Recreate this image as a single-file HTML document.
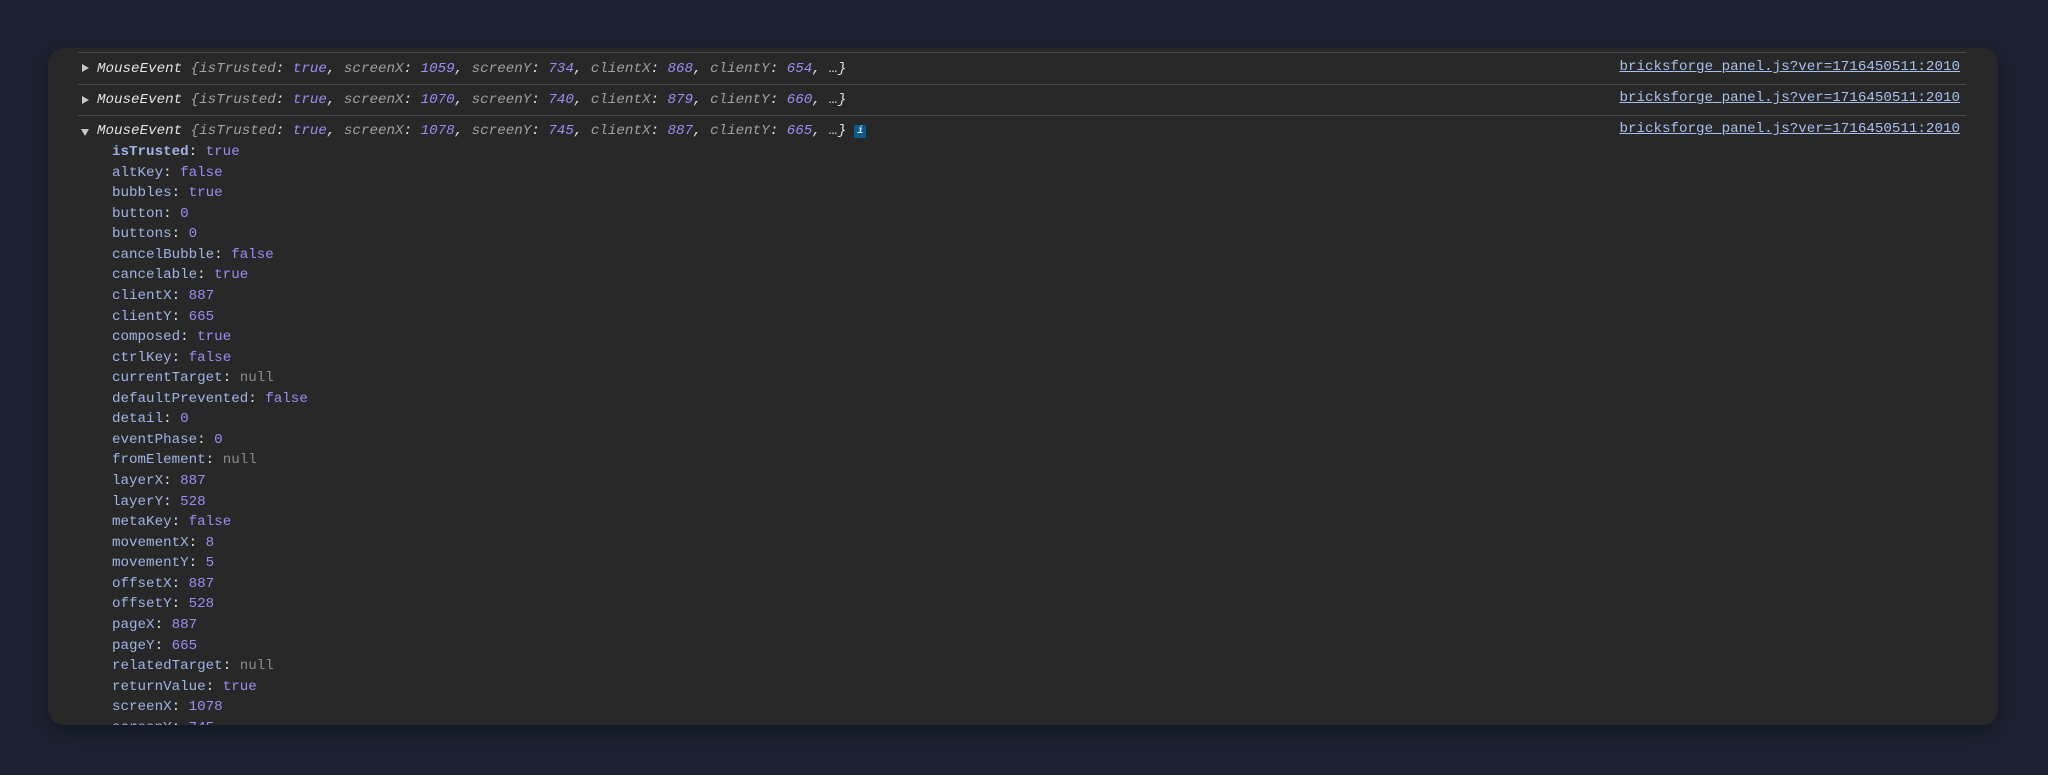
<!DOCTYPE html>
<html><head><meta charset="utf-8"><style>
html,body{margin:0;padding:0;width:2048px;height:775px;background:#1d2232;overflow:hidden}
.panel{position:absolute;left:48px;top:48px;width:1950px;height:677px;background:#282828;border-radius:16px;overflow:hidden;box-shadow:0 6px 24px rgba(0,0,0,.35)}
.t{position:absolute;font-family:"Liberation Mono",monospace;font-size:14.2px;line-height:20px;white-space:pre;color:#e3e3e3}
.hl{position:absolute;left:30px;width:1888px;height:1px;background:#4a4a4a}
.i{font-style:italic}
.k{color:#a0a0a0}
.n{color:#9d8cf5}
.p{color:#9fb4e6}
.nl{color:#8a8a8a}
.lk{color:#a8c0ee;text-decoration:underline;right:38px}
.tri{position:absolute;width:0;height:0}
.info{display:inline-block;width:12px;height:13px;background:#0e5a8a;color:#cfe6ff;font-size:10px;line-height:13px;text-align:center;border-radius:2px;vertical-align:1px;margin-left:8px;font-style:italic;font-weight:bold}
</style></head><body>
<div class="panel">
<div class="hl" style="top:4px"></div>
<div class="hl" style="top:36px"></div>
<div class="hl" style="top:67px"></div>

<div class="tri" style="left:34px;top:16px;border-left:7px solid #c8c8c8;border-top:4px solid transparent;border-bottom:4px solid transparent"></div>
<div class="t i" style="left:49px;top:11px">MouseEvent <span class="k">{isTrusted</span>: <span class="n">true</span>, <span class="k">screenX</span>: <span class="n">1059</span>, <span class="k">screenY</span>: <span class="n">734</span>, <span class="k">clientX</span>: <span class="n">868</span>, <span class="k">clientY</span>: <span class="n">654</span>, …}</div>
<div class="t lk" style="top:9px">bricksforge_panel.js?ver=1716450511:2010</div>

<div class="tri" style="left:34px;top:48px;border-left:7px solid #c8c8c8;border-top:4px solid transparent;border-bottom:4px solid transparent"></div>
<div class="t i" style="left:49px;top:42px">MouseEvent <span class="k">{isTrusted</span>: <span class="n">true</span>, <span class="k">screenX</span>: <span class="n">1070</span>, <span class="k">screenY</span>: <span class="n">740</span>, <span class="k">clientX</span>: <span class="n">879</span>, <span class="k">clientY</span>: <span class="n">660</span>, …}</div>
<div class="t lk" style="top:40px">bricksforge_panel.js?ver=1716450511:2010</div>

<div class="tri" style="left:33px;top:81px;border-top:7px solid #c8c8c8;border-left:4px solid transparent;border-right:4px solid transparent"></div>
<div class="t i" style="left:49px;top:73px">MouseEvent <span class="k">{isTrusted</span>: <span class="n">true</span>, <span class="k">screenX</span>: <span class="n">1078</span>, <span class="k">screenY</span>: <span class="n">745</span>, <span class="k">clientX</span>: <span class="n">887</span>, <span class="k">clientY</span>: <span class="n">665</span>, …}<span class="info">i</span></div>
<div class="t lk" style="top:71px">bricksforge_panel.js?ver=1716450511:2010</div>

<div class="t" style="left:64px;top:94px;line-height:20.57px"><span class="p"><b>isTrusted</b></span>: <span class="n">true</span>
<span class="p">altKey</span>: <span class="n">false</span>
<span class="p">bubbles</span>: <span class="n">true</span>
<span class="p">button</span>: <span class="n">0</span>
<span class="p">buttons</span>: <span class="n">0</span>
<span class="p">cancelBubble</span>: <span class="n">false</span>
<span class="p">cancelable</span>: <span class="n">true</span>
<span class="p">clientX</span>: <span class="n">887</span>
<span class="p">clientY</span>: <span class="n">665</span>
<span class="p">composed</span>: <span class="n">true</span>
<span class="p">ctrlKey</span>: <span class="n">false</span>
<span class="p">currentTarget</span>: <span class="nl">null</span>
<span class="p">defaultPrevented</span>: <span class="n">false</span>
<span class="p">detail</span>: <span class="n">0</span>
<span class="p">eventPhase</span>: <span class="n">0</span>
<span class="p">fromElement</span>: <span class="nl">null</span>
<span class="p">layerX</span>: <span class="n">887</span>
<span class="p">layerY</span>: <span class="n">528</span>
<span class="p">metaKey</span>: <span class="n">false</span>
<span class="p">movementX</span>: <span class="n">8</span>
<span class="p">movementY</span>: <span class="n">5</span>
<span class="p">offsetX</span>: <span class="n">887</span>
<span class="p">offsetY</span>: <span class="n">528</span>
<span class="p">pageX</span>: <span class="n">887</span>
<span class="p">pageY</span>: <span class="n">665</span>
<span class="p">relatedTarget</span>: <span class="nl">null</span>
<span class="p">returnValue</span>: <span class="n">true</span>
<span class="p">screenX</span>: <span class="n">1078</span>
<span class="p">screenY</span>: <span class="n">745</span></div>
</div>
</body></html>
